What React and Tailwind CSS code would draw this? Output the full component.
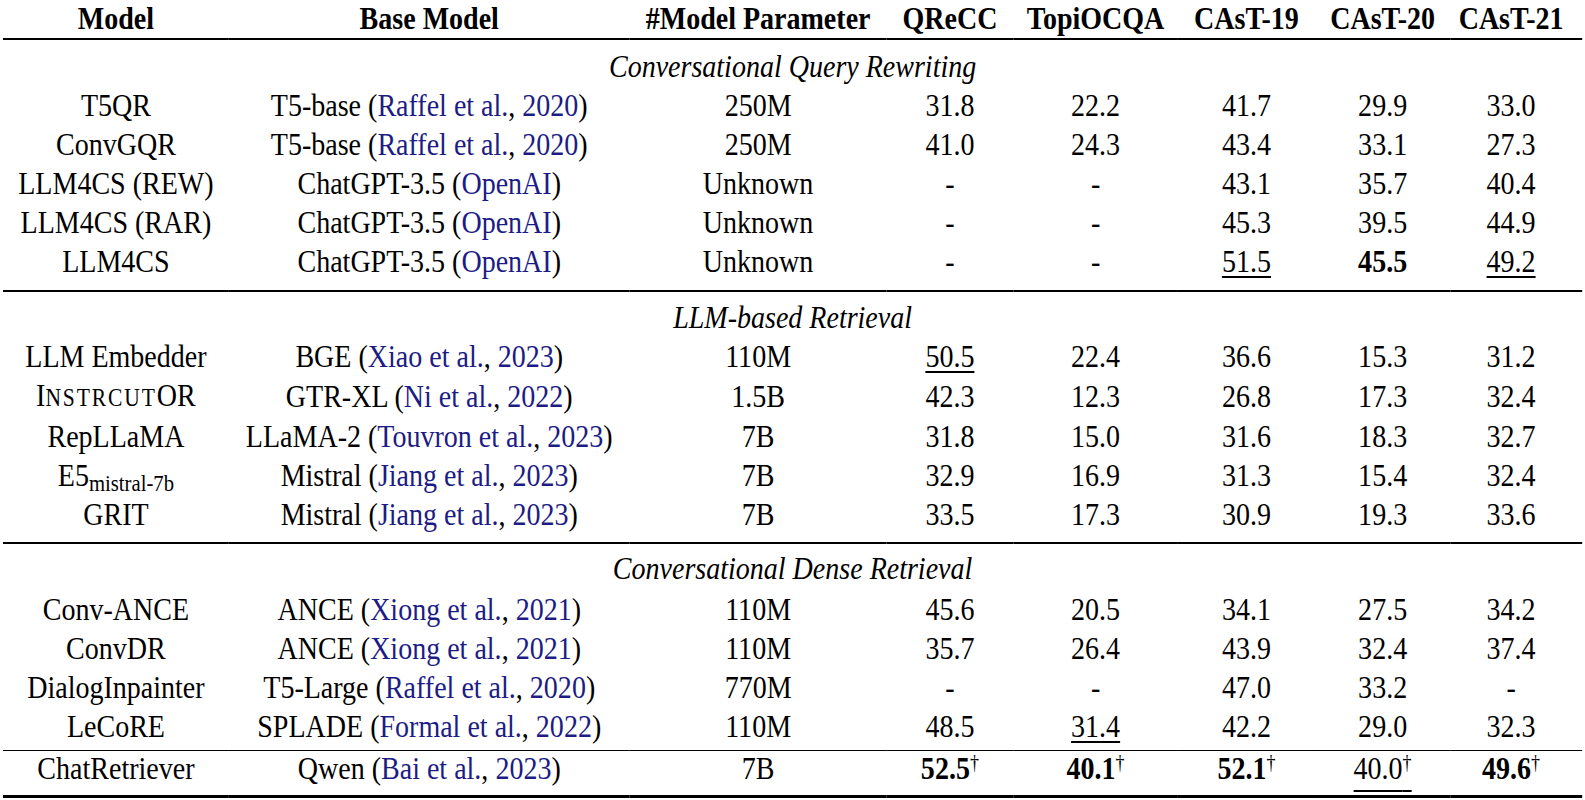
const BLUE = 'text-[#1c1c84]';

// widths are in unscaled table units; the table is narrowed with scale-x to match the condensed glyphs
const cols = ['w-[262px]', 'w-[465px]', 'w-[298px]', 'w-[147px]', 'w-[191px]', 'w-[159px]', 'w-[157px]', 'w-[153px]'];
const headers = ['Model', 'Base Model', '#Model Parameter', 'QReCC', 'TopiOCQA', 'CAsT-19', 'CAsT-20', 'CAsT-21'];

const Cite = ({ who, year }) => (
  <>
    (<span className={BLUE}>{who}</span>
    {year && (
      <>
        , <span className={BLUE}>{year}</span>
      </>
    )}
    )
  </>
);

const Base = ({ name, who, year }) => (
  <>
    {name} <Cite who={who} year={year} />
  </>
);

const Num = ({ x }) => {
  if (typeof x === 'string') return x;
  const dagger = x.d ? (
    <span className="align-[10px] text-[21px] font-normal leading-[0]">†</span>
  ) : null;
  let cls = x.b ? 'font-bold' : '';
  if (x.u) cls += x.d ? ' underline underline-offset-[11px] decoration-[1.5px]' : ' underline underline-offset-[4px] decoration-[1.5px]';
  return (
    <span className={cls}>
      {x.t}
      {dagger}
    </span>
  );
};

const sections = [
  {
    title: 'Conversational Query Rewriting',
    rows: [
      ['T5QR', { name: 'T5-base', who: 'Raffel et al.', year: '2020' }, '250M', '31.8', '22.2', '41.7', '29.9', '33.0'],
      ['ConvGQR', { name: 'T5-base', who: 'Raffel et al.', year: '2020' }, '250M', '41.0', '24.3', '43.4', '33.1', '27.3'],
      ['LLM4CS (REW)', { name: 'ChatGPT-3.5', who: 'OpenAI' }, 'Unknown', '-', '-', '43.1', '35.7', '40.4'],
      ['LLM4CS (RAR)', { name: 'ChatGPT-3.5', who: 'OpenAI' }, 'Unknown', '-', '-', '45.3', '39.5', '44.9'],
      ['LLM4CS', { name: 'ChatGPT-3.5', who: 'OpenAI' }, 'Unknown', '-', '-', { t: '51.5', u: 1 }, { t: '45.5', b: 1 }, { t: '49.2', u: 1 }],
    ],
  },
  {
    title: 'LLM-based Retrieval',
    rows: [
      ['LLM Embedder', { name: 'BGE', who: 'Xiao et al.', year: '2023' }, '110M', { t: '50.5', u: 1 }, '22.4', '36.6', '15.3', '31.2'],
      ['instructor', { name: 'GTR-XL', who: 'Ni et al.', year: '2022' }, '1.5B', '42.3', '12.3', '26.8', '17.3', '32.4'],
      ['RepLLaMA', { name: 'LLaMA-2', who: 'Touvron et al.', year: '2023' }, '7B', '31.8', '15.0', '31.6', '18.3', '32.7'],
      ['e5', { name: 'Mistral', who: 'Jiang et al.', year: '2023' }, '7B', '32.9', '16.9', '31.3', '15.4', '32.4'],
      ['GRIT', { name: 'Mistral', who: 'Jiang et al.', year: '2023' }, '7B', '33.5', '17.3', '30.9', '19.3', '33.6'],
    ],
  },
  {
    title: 'Conversational Dense Retrieval',
    rows: [
      ['Conv-ANCE', { name: 'ANCE', who: 'Xiong et al.', year: '2021' }, '110M', '45.6', '20.5', '34.1', '27.5', '34.2'],
      ['ConvDR', { name: 'ANCE', who: 'Xiong et al.', year: '2021' }, '110M', '35.7', '26.4', '43.9', '32.4', '37.4'],
      ['DialogInpainter', { name: 'T5-Large', who: 'Raffel et al.', year: '2020' }, '770M', '-', '-', '47.0', '33.2', '-'],
      ['LeCoRE', { name: 'SPLADE', who: 'Formal et al.', year: '2022' }, '110M', '48.5', { t: '31.4', u: 1 }, '42.2', '29.0', '32.3'],
    ],
  },
];

const finalRow = [
  'ChatRetriever',
  { name: 'Qwen', who: 'Bai et al.', year: '2023' },
  '7B',
  { t: '52.5', b: 1, d: 1 },
  { t: '40.1', b: 1, d: 1 },
  { t: '52.1', b: 1, d: 1 },
  { t: '40.0', u: 1, d: 1 },
  { t: '49.6', b: 1, d: 1 },
];

const ModelName = ({ name }) => {
  if (name === 'instructor')
    return (
      <>
        I<span className="text-[25px] tracking-[2.2px]">NSTRCUT</span>OR
      </>
    );
  if (name === 'e5')
    return (
      <>
        E5<span className="align-[-5px] text-[24px] leading-[0]">mistral-7b</span>
      </>
    );
  return name;
};

const Row = ({ row, cellCls }) => (
  <tr>
    {row.map((c, i) => (
      <td key={i} className={`p-0 text-center whitespace-nowrap ${cellCls} ${i === 7 ? 'pr-[12px]' : ''}`}>
        {i === 0 ? <ModelName name={c} /> : i === 1 ? <Base {...c} /> : i === 2 ? c : <Num x={c} />}
      </td>
    ))}
  </tr>
);

// spacing under the last row of each block, down to its rule
const lastCls = ['pb-[9px] border-b-2 border-black', 'pb-[8px] border-b-2 border-black', 'pb-[4px] border-b border-black'];
const titlePad = ['pt-[7px]', 'pt-[6px]', 'pt-[5px] pb-[2px]'];

const SectionRows = ({ s, si }) => (
  <>
    <tr>
      <td colSpan={8} className={`p-0 ${titlePad[si]} text-center italic leading-[39px]`}>
        {s.title}
      </td>
    </tr>
    {s.rows.map((r, ri) => (
      <Row
        key={ri}
        row={r}
        cellCls={ri === s.rows.length - 1 ? `leading-[39px] ${lastCls[si]}` : 'leading-[39px]'}
      />
    ))}
  </>
);

export default function App() {
  return (
    <div className="min-h-screen w-full overflow-hidden bg-white font-['Liberation_Serif','Times_New_Roman',serif] text-[32.5px] text-black">
      <table className="ml-[3px] w-[1832px] origin-left scale-x-[0.862] table-fixed border-collapse">
        <colgroup>
          {cols.map((c, i) => (
            <col key={i} className={c} />
          ))}
        </colgroup>
        <thead>
          <tr>
            {headers.map((h, i) => (
              <th
                key={h}
                className={`border-b-2 border-black p-0 pb-[2px] align-top text-center font-bold leading-[36px] whitespace-nowrap ${i === 7 ? 'pr-[12px]' : ''}`}
              >
                {h}
              </th>
            ))}
          </tr>
        </thead>
        <tbody>
          {sections.map((s, si) => (
            <SectionRows key={s.title} s={s} si={si} />
          ))}
          <Row row={finalRow} cellCls="pt-0 pb-[10px] leading-[34px] border-b-[3px] border-black" />
        </tbody>
      </table>
    </div>
  );
}
